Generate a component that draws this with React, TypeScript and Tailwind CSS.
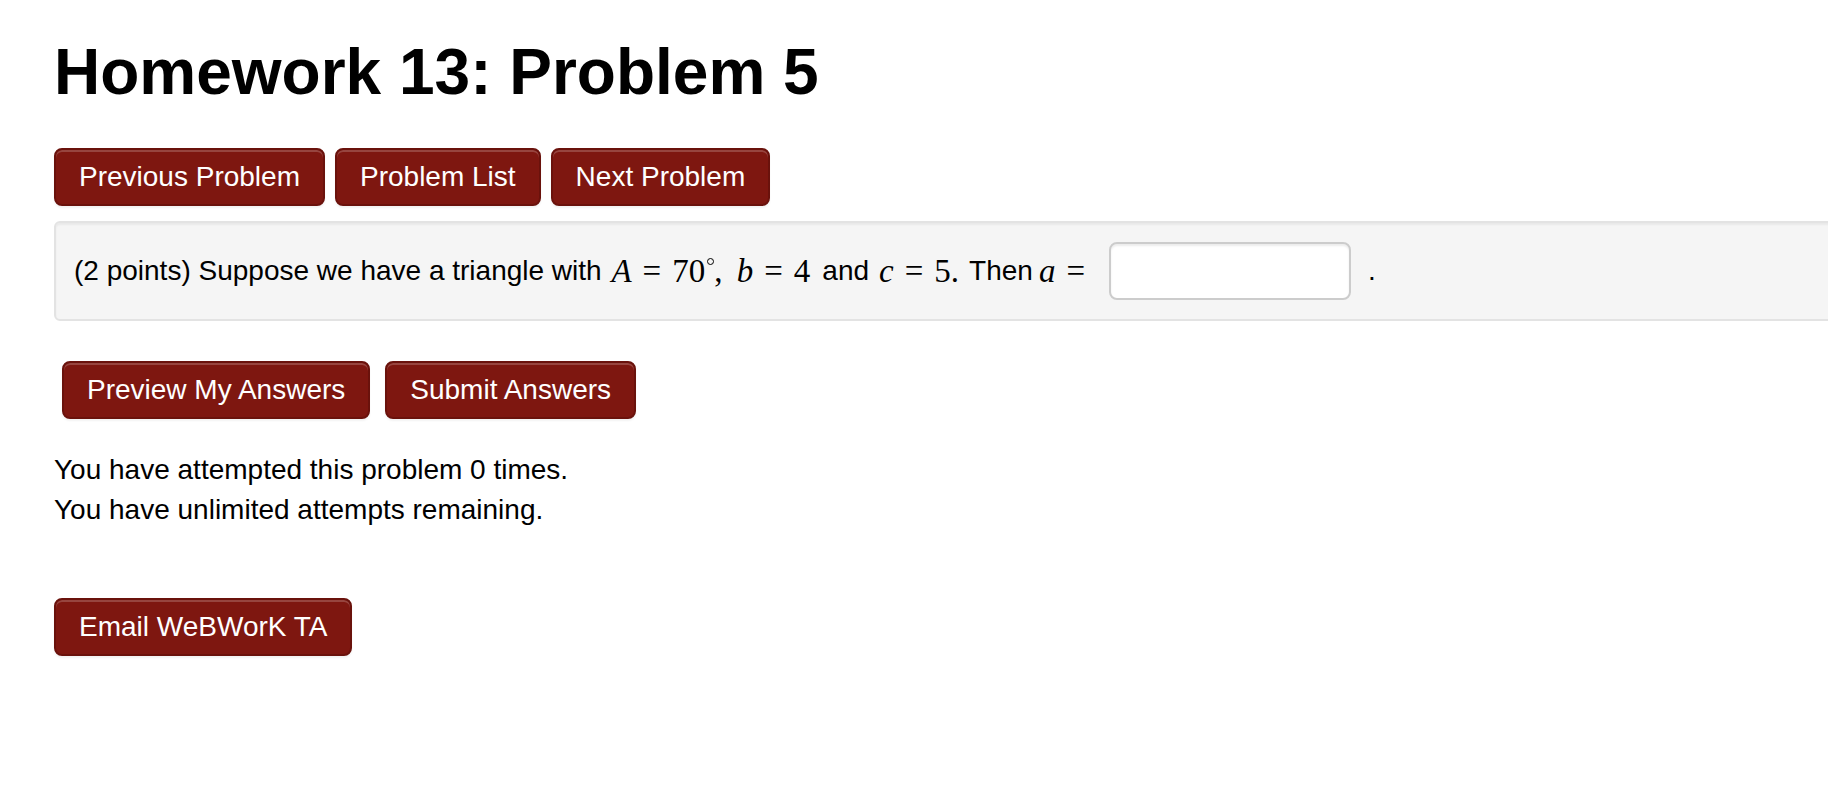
import type { ReactNode } from "react";

function Btn({ children, className = "" }: { children: ReactNode; className?: string }) {
  return (
    <button
      type="button"
      className={`rounded-[8px] border-2 border-[#6a120c] bg-[#7e1710] px-[23px] py-[7px] text-[28px] leading-[40px] text-white shadow-[inset_0_2px_0_rgba(255,255,255,0.2),0_2px_2px_rgba(0,0,0,0.05)] ${className}`}
    >
      {children}
    </button>
  );
}

function M({ children }: { children: ReactNode }) {
  return <span className="font-['Liberation_Serif',serif] text-[33px]">{children}</span>;
}

function Eq() {
  return <span className="mx-[11px]">=</span>;
}

export default function App() {
  return (
    <div className="min-h-screen overflow-x-hidden bg-white pl-[54px] font-['Liberation_Sans',Arial,sans-serif] text-[28px] leading-[40px] text-black">
      <h1 className="pt-[40px] text-[64px] font-bold leading-[64px]">Homework 13: Problem 5</h1>

      <div className="mt-[44px] flex gap-[10px]">
        <Btn>Previous Problem</Btn>
        <Btn>Problem List</Btn>
        <Btn>Next Problem</Btn>
      </div>

      <div className="mt-[15px] flex w-[1800px] items-center rounded-[6px] border-2 border-[#e3e3e3] bg-[#f5f5f5] px-[18px] py-[19px] shadow-[inset_0_2px_2px_rgba(0,0,0,0.05)]">
        <span>(2 points) Suppose we have a triangle with&nbsp;</span>
        <M>
          <i className="ml-[2px]">A</i>
          <Eq />
          70
          <span className="relative -top-[17px] ml-[2px] inline-block size-[7px] rounded-full border-[1.5px] border-black" />
          ,&nbsp;
          <i className="ml-[6px]">b</i>
          <Eq />4
        </M>
        <span className="ml-[12px]">and</span>
        <M>
          <i className="ml-[10px]">c</i>
          <Eq />5.
        </M>
        <span className="ml-[10px]">Then</span>
        <M>
          <i className="ml-[6px]">a</i>
          <Eq />
        </M>
        <input
          type="text"
          className="ml-[13px] h-[58px] w-[242px] rounded-[8px] border-2 border-[#cccccc] bg-white shadow-[inset_0_2px_2px_rgba(0,0,0,0.075)] outline-none"
        />
        <span className="ml-[17px]">.</span>
      </div>

      <div className="ml-[8px] mt-[40px] flex gap-[15px]">
        <Btn>Preview My Answers</Btn>
        <Btn>Submit Answers</Btn>
      </div>

      <div className="mt-[31px]">
        <div>You have attempted this problem 0 times.</div>
        <div>You have unlimited attempts remaining.</div>
      </div>

      <div className="mt-[68px]">
        <Btn>Email WeBWorK TA</Btn>
      </div>
    </div>
  );
}
